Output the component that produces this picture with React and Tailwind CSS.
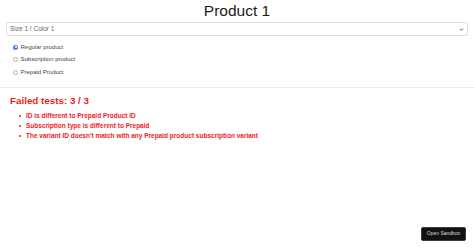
import React from 'react';

const options = [
  { label: 'Regular product', checked: true },
  { label: 'Subscription product', checked: false },
  { label: 'Prepaid Product', checked: false },
];

const failures = [
  'ID is different to Prepaid Product ID',
  'Subscription type is different to Prepaid',
  "The variant ID doesn't match with any Prepaid product subscription variant",
];

const Radio = ({ checked }) =>
  checked ? (
    <span className="flex h-[5px] w-[5px] items-center justify-center rounded-full bg-[#3b82f6]">
      <span className="h-[2px] w-[2px] rounded-full bg-white" />
    </span>
  ) : (
    <span className="h-[5px] w-[5px] rounded-full border border-[#b5b5b5] bg-white" />
  );

export default function App() {
  return (
    <div className="relative h-[248px] w-full overflow-hidden bg-white font-['Liberation_Sans',Arial,sans-serif]">
      <h1 className="pt-[1px] text-center text-[15.5px] leading-[20px] text-[#1a1a1a]">Product 1</h1>

      <div className="mx-[6px] mt-[1px] flex h-[14px] items-center justify-between rounded-[2px] border border-[#dedede] pl-[3px] pr-[3px] text-[6.5px] text-[#666]">
        <span>Size 1 / Color 1</span>
        <svg width="5" height="5" viewBox="0 0 10 10" fill="none" stroke="#555" strokeWidth="2">
          <path d="M2 3.5 L5 6.5 L8 3.5" />
        </svg>
      </div>

      <div className="mt-[5px] pl-[13px]">
        {options.map((o) => (
          <div key={o.label} className="flex h-[12.5px] items-center gap-[2.5px] text-[6px] text-[#444]">
            <Radio checked={o.checked} />
            <span>{o.label}</span>
          </div>
        ))}
      </div>

      <div className="mt-[8px] border-t border-[#ececec]" />

      <h2 className="mt-[6px] pl-[10px] text-[9.8px] font-bold leading-[14px] text-[#f01a24]">Failed tests: 3 / 3</h2>

      <ul className="mt-[3px] pl-[19px]">
        {failures.map((f) => (
          <li key={f} className="flex h-[10px] items-center gap-[5px] text-[6.5px] font-bold text-[#f01a24]">
            <span className="h-[2px] w-[2px] rounded-full bg-[#f01a24]" />
            <span>{f}</span>
          </li>
        ))}
      </ul>

      <button
        type="button"
        className="absolute bottom-[7px] right-[8px] flex h-[14px] w-[45px] items-center justify-center rounded-[2px] border border-[#3a3a3a] bg-[#111] text-[5px] text-[#ddd]"
      >
        Open Sandbox
      </button>
    </div>
  );
}
